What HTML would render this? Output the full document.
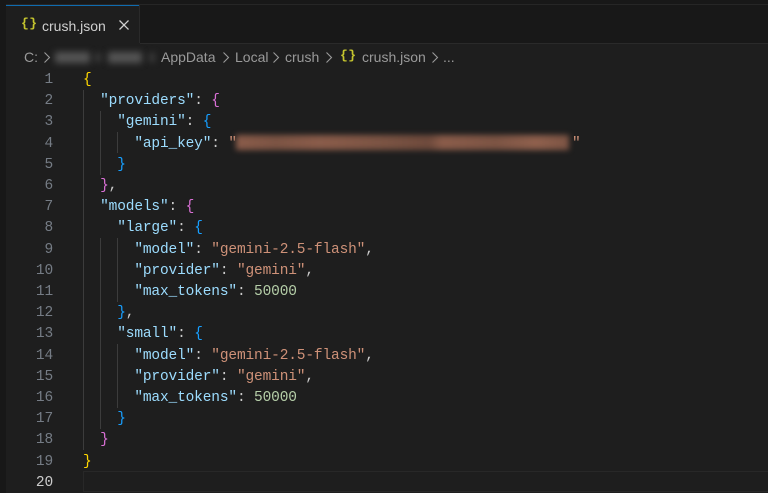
<!DOCTYPE html>
<html><head><meta charset="utf-8">
<style>
html,body{margin:0;padding:0;background:#1e1e1e}
body{width:768px;height:493px;overflow:hidden;position:relative;font-family:"Liberation Sans",sans-serif}
.abs{position:absolute}
.wrap{position:absolute;left:0;top:1px;width:768px;height:492px;overflow:hidden}
.ln{position:absolute;left:0;width:53px;text-align:right;color:#757c85;font:14.5px/21.2px "Liberation Mono",monospace;letter-spacing:-.15px}
.c{position:absolute;left:83px;white-space:pre;color:#cccccc;font:14.5px/21.2px "Liberation Mono",monospace;letter-spacing:-.15px}
.k{color:#9cdcfe}.s{color:#ce9178}.n{color:#b5cea8}
.y{color:#ffd700}.p{color:#da70d6}.b{color:#179fff}
.g{position:absolute;width:1px;background:#3c3c3c}
.bc{position:absolute;top:49px;font-size:14px;line-height:17px;color:#9a9a9a;white-space:pre}
.ch{position:absolute;top:51px}
.blur{position:absolute;background:#8a5a48;filter:blur(3.5px)}
.ic{position:absolute;font:13px/18px "Liberation Mono",monospace;font-weight:bold;color:#c5c52e;white-space:pre;letter-spacing:.4px}
</style></head><body>
<div class="abs" style="left:0;top:0;width:768px;height:43px;background:#181818"></div>
<div class="abs" style="left:0;top:4px;width:768px;height:1px;background:#262626"></div>
<div class="abs" style="left:0;top:0;width:6px;height:493px;background:#181818"></div>
<div class="abs" style="left:6px;top:5px;width:133px;height:39px;background:#1e1e1e"></div>
<div class="abs" style="left:6px;top:5px;width:133px;height:1px;background:#0f6cb0"></div>
<div class="abs" style="left:139px;top:5px;width:1px;height:38px;background:#2a2a2a"></div>
<div class="abs" style="left:140px;top:43px;width:628px;height:1px;background:#2a2a2a"></div>
<div class="ic" style="left:21px;top:15px">{}</div>
<div class="abs" style="left:42px;top:17px;font-size:14px;line-height:18px;color:#d0d0d0">crush.json</div>
<svg class="abs" style="left:117px;top:18px" width="14" height="14" viewBox="0 0 14 14"><path d="M2.5 2.5L11.5 11.5M11.5 2.5L2.5 11.5" stroke="#d0d0d0" stroke-width="1.3" fill="none"/></svg>

<div class="bc" style="left:24px">C:</div>
<svg class="ch" style="left:43px" width="8" height="13" viewBox="0 0 8 13"><path d="M1.5 1.5L6.5 6.5L1.5 11.5" stroke="#9a9a9a" stroke-width="1.1" fill="none"/></svg>
<div class="blur" style="left:55px;top:52px;width:35px;height:11px;background:#555555"></div>
<div class="blur" style="left:96px;top:53px;width:4px;height:9px;background:#4c4c4c"></div>
<div class="blur" style="left:108px;top:52px;width:34px;height:11px;background:#555555"></div>
<div class="blur" style="left:150px;top:53px;width:4px;height:9px;background:#4c4c4c"></div>
<div class="bc" style="left:161px">AppData</div>
<svg class="ch" style="left:222px" width="8" height="13" viewBox="0 0 8 13"><path d="M1.5 1.5L6.5 6.5L1.5 11.5" stroke="#9a9a9a" stroke-width="1.1" fill="none"/></svg>
<div class="bc" style="left:235px">Local</div>
<svg class="ch" style="left:272px" width="8" height="13" viewBox="0 0 8 13"><path d="M1.5 1.5L6.5 6.5L1.5 11.5" stroke="#9a9a9a" stroke-width="1.1" fill="none"/></svg>
<div class="bc" style="left:285px">crush</div>
<svg class="ch" style="left:325px" width="8" height="13" viewBox="0 0 8 13"><path d="M1.5 1.5L6.5 6.5L1.5 11.5" stroke="#9a9a9a" stroke-width="1.1" fill="none"/></svg>
<div class="ic" style="left:340px;top:47px">{}</div>
<div class="bc" style="left:362px">crush.json</div>
<svg class="ch" style="left:431px" width="8" height="13" viewBox="0 0 8 13"><path d="M1.5 1.5L6.5 6.5L1.5 11.5" stroke="#9a9a9a" stroke-width="1.1" fill="none"/></svg>
<div class="bc" style="left:443px">...</div>

<div class="g" style="left:83px;top:90px;height:360px"></div>
<div class="g" style="left:100px;top:111px;height:64px"></div>
<div class="g" style="left:100px;top:238px;height:191px"></div>
<div class="g" style="left:117px;top:132px;height:21px"></div>
<div class="g" style="left:117px;top:238px;height:64px"></div>
<div class="g" style="left:117px;top:344px;height:64px"></div>
<div class="abs" style="left:83px;top:471px;width:685px;height:21px;border:1px solid #282828;box-sizing:border-box;border-right:none"></div>

<div class="wrap">
<div class="ln" style="top:69px">1</div>
<div class="ln" style="top:90px">2</div>
<div class="ln" style="top:111px">3</div>
<div class="ln" style="top:133px">4</div>
<div class="ln" style="top:154px">5</div>
<div class="ln" style="top:175px">6</div>
<div class="ln" style="top:196px">7</div>
<div class="ln" style="top:217px">8</div>
<div class="ln" style="top:239px">9</div>
<div class="ln" style="top:260px">10</div>
<div class="ln" style="top:281px">11</div>
<div class="ln" style="top:302px">12</div>
<div class="ln" style="top:323px">13</div>
<div class="ln" style="top:345px">14</div>
<div class="ln" style="top:366px">15</div>
<div class="ln" style="top:387px">16</div>
<div class="ln" style="top:408px">17</div>
<div class="ln" style="top:429px">18</div>
<div class="ln" style="top:451px">19</div>
<div class="ln" style="top:472px;color:#cccccc">20</div>

<div class="c" style="top:69px"><span class="y">{</span></div>
<div class="c" style="top:90px">  <span class="k">"providers"</span>: <span class="p">{</span></div>
<div class="c" style="top:111px">    <span class="k">"gemini"</span>: <span class="b">{</span></div>
<div class="c" style="top:133px">      <span class="k">"api_key"</span>: <span class="s">"</span></div>
<div class="abs" style="left:236px;top:134px;width:333px;height:15px;filter:blur(3px);background:linear-gradient(90deg,#8a5c4a 0,#7c5444 12%,#8a5c4a 25%,#7a5343 45%,#6e4a3c 58%,#8a5c4a 62%,#7c5444 78%,#8f604d 90%,#7c5444 100%)"></div>
<div class="c" style="top:133px;left:572px"><span class="s">"</span></div>
<div class="c" style="top:154px">    <span class="b">}</span></div>
<div class="c" style="top:175px">  <span class="p">}</span>,</div>
<div class="c" style="top:196px">  <span class="k">"models"</span>: <span class="p">{</span></div>
<div class="c" style="top:217px">    <span class="k">"large"</span>: <span class="b">{</span></div>
<div class="c" style="top:239px">      <span class="k">"model"</span>: <span class="s">"gemini-2.5-flash"</span>,</div>
<div class="c" style="top:260px">      <span class="k">"provider"</span>: <span class="s">"gemini"</span>,</div>
<div class="c" style="top:281px">      <span class="k">"max_tokens"</span>: <span class="n">50000</span></div>
<div class="c" style="top:302px">    <span class="b">}</span>,</div>
<div class="c" style="top:323px">    <span class="k">"small"</span>: <span class="b">{</span></div>
<div class="c" style="top:345px">      <span class="k">"model"</span>: <span class="s">"gemini-2.5-flash"</span>,</div>
<div class="c" style="top:366px">      <span class="k">"provider"</span>: <span class="s">"gemini"</span>,</div>
<div class="c" style="top:387px">      <span class="k">"max_tokens"</span>: <span class="n">50000</span></div>
<div class="c" style="top:408px">    <span class="b">}</span></div>
<div class="c" style="top:429px">  <span class="p">}</span></div>
<div class="c" style="top:451px"><span class="y">}</span></div>
</div>
</body></html>
